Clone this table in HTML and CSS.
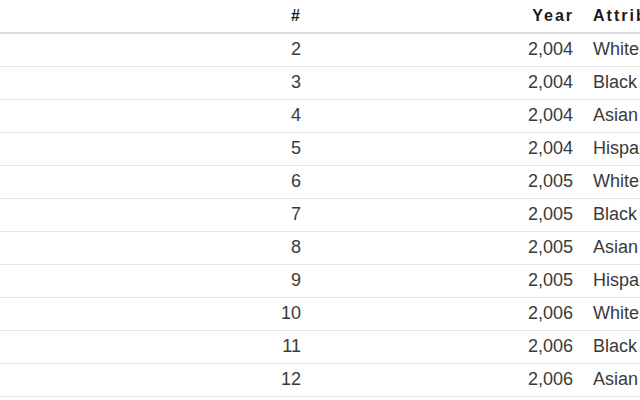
FILE: index.html
```html
<!DOCTYPE html>
<html>
<head>
<meta charset="utf-8">
<link rel="stylesheet" href="styles.css">
</head>
<body>
<div class="wrap">
<table class="data">
  <colgroup>
    <col class="c-num">
    <col class="c-year">
    <col class="c-attr">
  </colgroup>
  <thead>
    <tr><th class="num">#</th><th class="num">Year</th><th class="txt">Attribute</th></tr>
  </thead>
  <tbody>
    <tr><td class="num">2</td><td class="num">2,004</td><td class="txt">White</td></tr>
    <tr><td class="num">3</td><td class="num">2,004</td><td class="txt">Black</td></tr>
    <tr><td class="num">4</td><td class="num">2,004</td><td class="txt">Asian</td></tr>
    <tr><td class="num">5</td><td class="num">2,004</td><td class="txt">Hispanic</td></tr>
    <tr><td class="num">6</td><td class="num">2,005</td><td class="txt">White</td></tr>
    <tr><td class="num">7</td><td class="num">2,005</td><td class="txt">Black</td></tr>
    <tr><td class="num">8</td><td class="num">2,005</td><td class="txt">Asian</td></tr>
    <tr><td class="num">9</td><td class="num">2,005</td><td class="txt">Hispanic</td></tr>
    <tr><td class="num">10</td><td class="num">2,006</td><td class="txt">White</td></tr>
    <tr><td class="num">11</td><td class="num">2,006</td><td class="txt">Black</td></tr>
    <tr><td class="num">12</td><td class="num">2,006</td><td class="txt">Asian</td></tr>
    <tr><td class="num">13</td><td class="num">2,006</td><td class="txt">Hispanic</td></tr>
  </tbody>
</table>
</div>
</body>
</html>
```
FILE: styles.css
```css
html, body {
  margin: 0;
  padding: 0;
  background: #fff;
}
.wrap {
  width: 640px;
  height: 400px;
  overflow: hidden;
}
.data {
  border-collapse: collapse;
  table-layout: fixed;
  width: 783px;
  font-family: "Liberation Sans", Arial, sans-serif;
}
.c-num { width: 311px; }
.c-year { width: 272px; }
.c-attr { width: 200px; }
.data th {
  font-size: 16px;
  font-weight: bold;
  letter-spacing: 2px;
  color: #1a1a1a;
  line-height: 23px;
  padding: 4px 10px 5px 10px;
  border-bottom: 2px solid #d9d9d9;
  white-space: nowrap;
}
.data th.num {
  padding-right: 9px;
}
.data td {
  font-size: 18px;
  color: #3a3a3a;
  line-height: 24px;
  padding: 3px 10px 5px 10px;
  border-top: 1px solid #e8e8e8;
  white-space: nowrap;
}
.data tbody tr:first-child td {
  border-top-color: #fff;
}
.num { text-align: right; }
.txt { text-align: left; }
```
